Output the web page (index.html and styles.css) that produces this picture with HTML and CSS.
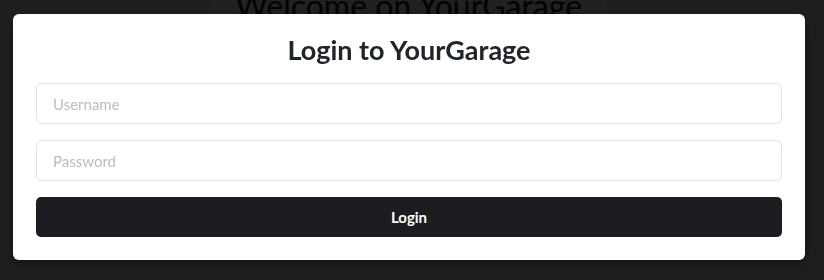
FILE: index.html
```html
<!DOCTYPE html>
<html lang="en">
<head>
    <meta charset="UTF-8">
    <meta name="viewport" content="width=device-width, initial-scale=1.0">
    <title>YourGarage</title>
    <link rel="stylesheet" href="styles.css">
</head>
<body>
    <div class="page">
        <div class="welcome">
            <h1>Welcome on YourGarage</h1>
        </div>
    </div>

    <div class="backdrop"></div>

    <div class="modal">
        <h2>Login to YourGarage</h2>
        <form id="loginForm">
            <input type="text" name="username" placeholder="Username">
            <input type="password" name="password" placeholder="Password">
            <button type="submit">Login</button>
        </form>
    </div>
</body>
</html>
```

FILE: styles.css
```css
body {
    font-family: Lato, "Noto Sans", sans-serif;
    margin: 0;
    padding: 0;
    background-color: #e9e9e9;
    height: 280px;
    overflow: hidden;
}

.page {
    display: flex;
    justify-content: center;
    padding-right: 7px;
}

.welcome {
    width: 397px;
    height: 200px;
    margin-top: -30px;
    background-color: #fafafa;
    text-align: center;
}

.welcome h1 {
    margin: 0;
    padding-top: 16px;
    font-size: 32px;
    font-weight: 400;
    white-space: nowrap;
    color: #111;
}

.backdrop {
    position: fixed;
    inset: 0;
    background-color: rgba(0, 0, 0, 0.87);
}

.modal {
    position: fixed;
    top: 14px;
    left: 13px;
    width: 792px;
    box-sizing: border-box;
    padding: 20px 23px 23px;
    background: white;
    border-radius: 6px;
    box-shadow: 0 4px 14px rgba(0, 0, 0, 0.4);
}

.modal h2 {
    margin: 0 0 18px;
    font-size: 27px;
    line-height: 31px;
    font-weight: 700;
    text-align: center;
    color: #212529;
}

form {
    display: flex;
    flex-direction: column;
    gap: 16px;
}

input {
    height: 41px;
    box-sizing: border-box;
    padding: 0 16px;
    border: 1px solid #dee2e6;
    border-radius: 5px;
    font-family: inherit;
    font-size: 15px;
    color: #212529;
}

input::placeholder {
    color: #b9bdc1;
}

button {
    height: 40px;
    background-color: #1c1d20;
    color: white;
    border: none;
    border-radius: 5px;
    font-family: inherit;
    font-size: 15px;
    font-weight: 700;
    cursor: pointer;
}
```
